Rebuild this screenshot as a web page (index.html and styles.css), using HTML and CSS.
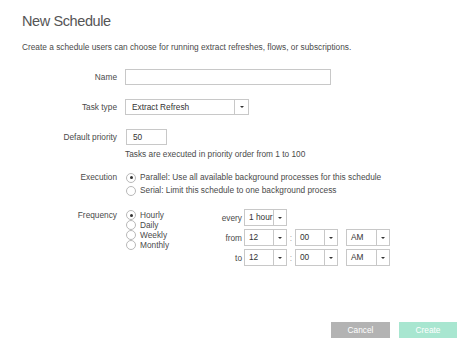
FILE: index.html
```html
<!DOCTYPE html>
<html>
<head>
<meta charset="utf-8">
<link rel="stylesheet" href="styles.css">
</head>
<body>
<div class="page">
  <h1 class="title">New Schedule</h1>
  <p class="desc">Create a schedule users can choose for running extract refreshes, flows, or subscriptions.</p>
  <div class="form">
    <div class="row row-name">
      <div class="lbl">Name</div>
      <div class="box name-input"></div>
    </div>
    <div class="row row-task">
      <div class="lbl">Task type</div>
      <div class="select task-select"><span class="val">Extract Refresh</span><span class="arrow"><i class="tri"></i></span></div>
    </div>
    <div class="row row-prio">
      <div class="lbl">Default priority</div>
      <div class="box prio-input">50</div>
    </div>
    <div class="row row-hint">
      <div class="lbl"></div>
      <div class="hint">Tasks are executed in priority order from 1 to 100</div>
    </div>
    <div class="row row-exec">
      <div class="lbl">Execution</div>
      <div class="radios exec">
        <div class="opt"><span class="radio on"></span>Parallel: Use all available background processes for this schedule</div>
        <div class="opt"><span class="radio"></span>Serial: Limit this schedule to one background process</div>
      </div>
    </div>
    <div class="row row-freq">
      <div class="lbl">Frequency</div>
      <div class="freq">
        <div class="radios freq-radios">
          <div class="opt"><span class="radio on"></span>Hourly</div>
          <div class="opt"><span class="radio"></span>Daily</div>
          <div class="opt"><span class="radio"></span>Weekly</div>
          <div class="opt"><span class="radio"></span>Monthly</div>
        </div>
        <div class="times">
          <div class="tlbl">every</div>
          <div class="select sm"><span class="val">1 hour</span><span class="arrow"><i class="tri"></i></span></div>
          <div class="tsp"></div><div class="tsp"></div><div class="tsp"></div><div class="tsp"></div>

          <div class="tlbl">from</div>
          <div class="select sm"><span class="val">12</span><span class="arrow"><i class="tri"></i></span></div>
          <div class="colon">:</div>
          <div class="select sm"><span class="val">00</span><span class="arrow"><i class="tri"></i></span></div>
          <div class="tsp"></div>
          <div class="select sm"><span class="val">AM</span><span class="arrow"><i class="tri"></i></span></div>

          <div class="tlbl">to</div>
          <div class="select sm"><span class="val">12</span><span class="arrow"><i class="tri"></i></span></div>
          <div class="colon">:</div>
          <div class="select sm"><span class="val">00</span><span class="arrow"><i class="tri"></i></span></div>
          <div class="tsp"></div>
          <div class="select sm"><span class="val">AM</span><span class="arrow"><i class="tri"></i></span></div>
        </div>
      </div>
    </div>
  </div>
  <div class="actions">
    <div class="btn cancel">Cancel</div>
    <div class="btn create">Create</div>
  </div>
</div>
</body>
</html>
```

FILE: styles.css
```css
html, body {
  margin: 0;
  padding: 0;
  background: #ffffff;
}
body {
  font-family: "Liberation Sans", Arial, sans-serif;
  font-size: 8.3px;
  color: #4a4a4a;
  width: 474px;
  height: 346px;
  overflow: hidden;
}
.page {
  padding: 12px 17px 0 22px;
}
.title {
  margin: 0;
  font-size: 14.5px;
  line-height: 18px;
  font-weight: normal;
  letter-spacing: -0.4px;
  color: #555555;
}
.desc {
  margin: 11px 0 0 0;
  line-height: 12px;
  color: #4a4a4a;
}
.form {
  display: flex;
  flex-direction: column;
  margin-top: 16px;
}
.row {
  display: grid;
  grid-template-columns: 95px auto;
  column-gap: 8px;
  align-items: center;
  justify-items: start;
}
.lbl {
  justify-self: end;
  text-align: right;
  white-space: nowrap;
  color: #4a4a4a;
}
.box {
  box-sizing: border-box;
  height: 16px;
  border: 1px solid #c8c8c8;
  background: #fff;
  line-height: 14px;
  padding-left: 6px;
  color: #333;
}
.name-input {
  width: 206px;
}
.row-task {
  margin-top: 14px;
}
.row-prio {
  margin-top: 14px;
}
.prio-input {
  width: 41px;
  margin-left: 1px;
}
.row-hint {
  margin-top: 4px;
}
.hint {
  line-height: 10px;
}
.select {
  box-sizing: border-box;
  display: flex;
  height: 16px;
  border: 1px solid #c8c8c8;
  background: #fff;
}
.select .val {
  flex: 1;
  line-height: 14px;
  padding-left: 6px;
  color: #333;
  white-space: nowrap;
  overflow: hidden;
}
.select .arrow {
  width: 13px;
  border-left: 1px solid #c8c8c8;
  display: flex;
  align-items: center;
  justify-content: center;
}
.tri {
  display: block;
  width: 0;
  height: 0;
  border-left: 2px solid transparent;
  border-right: 2px solid transparent;
  border-top: 2.5px solid #333;
}
.task-select {
  width: 124px;
}
.task-select .arrow {
  width: 13px;
}
.row-exec {
  margin-top: 12px;
  align-items: start;
}
.row-exec .lbl {
  line-height: 13px;
}
.radios {
  display: flex;
  flex-direction: column;
}
.exec .opt {
  line-height: 13px;
}
.opt {
  display: flex;
  align-items: center;
  white-space: nowrap;
  color: #4a4a4a;
}
.radio {
  box-sizing: border-box;
  width: 10px;
  height: 10px;
  border: 1px solid #b8b8b8;
  border-radius: 50%;
  background: #fff;
  margin-left: 1px;
  margin-right: 4px;
  position: relative;
  flex: none;
}
.radio.on::after {
  content: "";
  position: absolute;
  left: 2.5px;
  top: 2.5px;
  width: 3px;
  height: 3px;
  border-radius: 50%;
  background: #333;
}
.row-freq {
  margin-top: 12px;
  align-items: start;
}
.row-freq .lbl {
  line-height: 10px;
  padding-top: 1px;
}
.freq {
  display: flex;
  align-items: flex-start;
}
.freq-radios {
  width: 85px;
  padding-top: 1px;
}
.freq-radios .opt {
  line-height: 10px;
}
.times {
  display: grid;
  grid-template-columns: 34px 43px 8px 43px 8px 44px;
  grid-auto-rows: 17px;
  row-gap: 3px;
  align-items: center;
}
.tlbl {
  text-align: right;
  padding-right: 2px;
  white-space: nowrap;
}
.times .select {
  height: 17px;
}
.times .select .val {
  line-height: 15px;
  padding-left: 4px;
}
.sm .arrow {
  width: 12px;
}
.colon {
  text-align: center;
  color: #aaa;
}
.actions {
  display: flex;
  justify-content: flex-end;
  gap: 9px;
  margin-top: 56px;
}
.btn {
  height: 16px;
  line-height: 16px;
  text-align: center;
  color: #ffffff;
  font-size: 8.3px;
}
.cancel {
  width: 59px;
  background: #b3b3b3;
}
.create {
  width: 58px;
  background: #a8e6d0;
}
```
